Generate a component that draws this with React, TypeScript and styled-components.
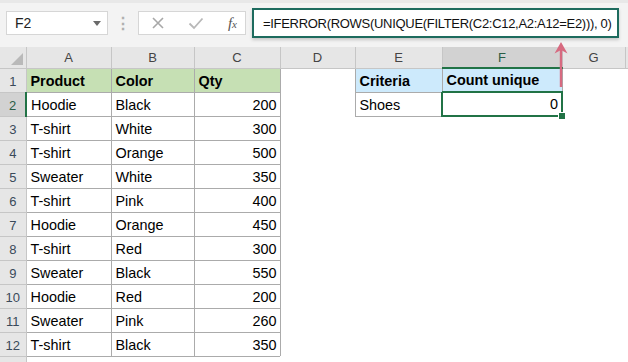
import React from "react";
import styled, { createGlobalStyle } from "styled-components";

const GlobalStyle = createGlobalStyle`
  html, body {
    margin: 0;
    padding: 0;
    background: #ffffff;
    overflow: hidden;
  }
`;

const COLS = [26, 85, 83, 86, 75, 87, 120, 63, 3];
const LETTERS = ["A", "B", "C", "D", "E", "F", "G", ""];

const DATA: [string, string, number][] = [
  ["Hoodie", "Black", 200],
  ["T-shirt", "White", 300],
  ["T-shirt", "Orange", 500],
  ["Sweater", "White", 350],
  ["T-shirt", "Pink", 400],
  ["Hoodie", "Orange", 450],
  ["T-shirt", "Red", 300],
  ["Sweater", "Black", 550],
  ["Hoodie", "Red", 200],
  ["Sweater", "Pink", 260],
  ["T-shirt", "Black", 350],
];

const App: React.FC = () => {
  return (
    <Page>
      <GlobalStyle />
      <Toolbar>
        <NameBox>
          <span>F2</span>
          <DropArrow />
        </NameBox>
        <Dots>⋮</Dots>
        <FuncBox>
          <svg width="14" height="14" viewBox="0 0 14 14">
            <path d="M2 2 L12 12 M12 2 L2 12" stroke="#a8a8a8" strokeWidth="1.6" fill="none" />
          </svg>
          <svg width="16" height="14" viewBox="0 0 16 14">
            <path d="M1.5 7.5 L6 12 L14.5 2.5" stroke="#b8b8b8" strokeWidth="1.8" fill="none" />
          </svg>
          <Fx>
            f<small>x</small>
          </Fx>
        </FuncBox>
        <FormulaBox>=IFERROR(ROWS(UNIQUE(FILTER(C2:C12,A2:A12=E2))), 0)</FormulaBox>
      </Toolbar>

      <Sheet>
        <colgroup>
          {COLS.map((w, i) => (
            <col key={i} style={{ width: w }} />
          ))}
        </colgroup>
        <tbody>
          <HeadRow>
            <Corner>
              <CornerTri />
            </Corner>
            {LETTERS.map((l, i) => (
              <ColHead key={i} $active={l === "F"}>
                {l}
              </ColHead>
            ))}
          </HeadRow>

          <Row>
            <RowHead>1</RowHead>
            <Cell $bordered $fill="#c6e0b4" $bold>Product</Cell>
            <Cell $bordered $fill="#c6e0b4" $bold>Color</Cell>
            <Cell $bordered $fill="#c6e0b4" $bold>Qty</Cell>
            <Cell />
            <Cell $bordered $fill="#cdeafc" $bold>Criteria</Cell>
            <Cell $bordered $fill="#cdeafc" $bold>Count unique</Cell>
            <Cell />
            <Cell />
          </Row>

          {DATA.map(([p, c, q], i) => (
            <Row key={i}>
              <RowHead $active={i === 0}>{i + 2}</RowHead>
              <Cell $bordered>{p}</Cell>
              <Cell $bordered>{c}</Cell>
              <Cell $bordered $right>{q}</Cell>
              <Cell />
              {i === 0 ? (
                <>
                  <Cell $bordered>Shoes</Cell>
                  <Cell $selected $right>
                    0
                    <Handle />
                  </Cell>
                </>
              ) : (
                <>
                  <Cell />
                  <Cell />
                </>
              )}
              <Cell />
              <Cell />
            </Row>
          ))}

          <Row>
            <RowHead />
            {LETTERS.map((_, i) => (
              <Cell key={i} />
            ))}
          </Row>
        </tbody>
      </Sheet>

      <Pointer width="14" height="46" viewBox="0 0 14 46">
        <path d="M7 8 L7 46" stroke="#d76a80" strokeWidth="2.4" />
        <polygon points="7,1 13.5,12.5 7,9 0.5,12.5" fill="#d76a80" />
      </Pointer>
    </Page>
  );
};

const Page = styled.div`
  position: relative;
  width: 628px;
  height: 362px;
  overflow: hidden;
  font-family: "Liberation Sans", Arial, sans-serif;
  color: #000;
`;

const Toolbar = styled.div`
  height: 47px;
  box-sizing: border-box;
  background: #f3f3f3;
  border-top: 3px solid #e8e8e8;
  display: flex;
  align-items: center;
  padding: 0 9px 4px 6px;
`;

const NameBox = styled.div`
  width: 102px;
  height: 24px;
  box-sizing: border-box;
  background: #fff;
  border: 1px solid #d6d6d6;
  display: flex;
  align-items: center;
  justify-content: space-between;
  padding: 0 6px 0 8px;
  font-size: 14px;
  color: #222;
`;

const DropArrow = styled.span`
  width: 0;
  height: 0;
  border-left: 4px solid transparent;
  border-right: 4px solid transparent;
  border-top: 5px solid #6a6a6a;
`;

const Dots = styled.div`
  width: 30px;
  text-align: center;
  color: #b0b0b0;
  font-size: 16px;
  font-weight: bold;
`;

const FuncBox = styled.div`
  width: 108px;
  height: 24px;
  box-sizing: border-box;
  background: #fff;
  border: 1px solid #d6d6d6;
  display: flex;
  align-items: center;
  justify-content: space-between;
  padding: 0 8px 0 12px;
  margin-right: 6px;
`;

const Fx = styled.span`
  font-family: "Liberation Serif", "Times New Roman", serif;
  font-style: italic;
  font-size: 15px;
  color: #555;
  small {
    font-size: 11px;
  }
`;

const FormulaBox = styled.div`
  flex: 1;
  height: 30px;
  box-sizing: border-box;
  background: #fff;
  border: 2.5px solid #1d6b5e;
  box-shadow: 0 2px 3px rgba(0, 0, 0, 0.18);
  display: flex;
  align-items: center;
  padding-left: 9px;
  font-size: 13px;
  letter-spacing: -0.3px;
  color: #111;
  white-space: nowrap;
  position: relative;
  z-index: 2;
`;

const Sheet = styled.table`
  border-collapse: collapse;
  table-layout: fixed;
  width: 628px;
  font-size: 14.4px;
`;

const HeadRow = styled.tr`
  height: 21px;
`;

const Row = styled.tr`
  height: 24px;
`;

const Corner = styled.th`
  background: #e6e6e6;
  border-right: 1px solid #c6c6c6;
  border-bottom: 1px solid #c6c6c6;
  position: relative;
  padding: 0;
`;

const CornerTri = styled.span`
  position: absolute;
  right: 3px;
  bottom: 3px;
  width: 0;
  height: 0;
  border-left: 12px solid transparent;
  border-bottom: 12px solid #b9b9b9;
`;

const ColHead = styled.th<{ $active?: boolean }>`
  background: ${(p) => (p.$active ? "#d2d2d2" : "#e6e6e6")};
  border-right: 1px solid #c6c6c6;
  border-bottom: ${(p) => (p.$active ? "2px solid #217346" : "1px solid #c6c6c6")};
  font-weight: normal;
  font-size: 13px;
  color: ${(p) => (p.$active ? "#2a5d45" : "#444")};
  padding: 0;
  text-align: center;
`;

const RowHead = styled.th<{ $active?: boolean }>`
  background: ${(p) => (p.$active ? "#d2d2d2" : "#e6e6e6")};
  border-right: ${(p) => (p.$active ? "2px solid #217346" : "1px solid #c6c6c6")};
  border-bottom: 1px solid #c6c6c6;
  font-weight: normal;
  font-size: 13px;
  color: ${(p) => (p.$active ? "#2a5d45" : "#3a4a5a")};
  padding: 0;
  text-align: center;
  vertical-align: bottom;
  padding-bottom: 3px;
`;

const Cell = styled.td<{
  $bordered?: boolean;
  $fill?: string;
  $bold?: boolean;
  $right?: boolean;
  $selected?: boolean;
}>`
  background: ${(p) => p.$fill || "#fff"};
  border: ${(p) =>
    p.$selected ? "2px solid #217346" : p.$bordered ? "1px solid #ababab" : "none"};
  font-weight: ${(p) => (p.$bold ? "bold" : "normal")};
  text-align: ${(p) => (p.$right ? "right" : "left")};
  padding: 0 3px 2px 4px;
  vertical-align: bottom;
  line-height: 18px;
  white-space: nowrap;
  overflow: visible;
  position: relative;
`;

const Handle = styled.span`
  position: absolute;
  right: -5px;
  bottom: -5px;
  width: 6px;
  height: 6px;
  background: #217346;
  border: 1px solid #fff;
  z-index: 3;
`;

const Pointer = styled.svg`
  position: absolute;
  left: 554px;
  top: 41px;
  z-index: 4;
`;

export default App;
